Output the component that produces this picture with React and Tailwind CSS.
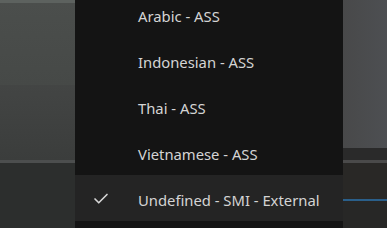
import { Check } from "lucide-react";

const tracks = [
    { label: "Arabic - ASS" },
    { label: "Indonesian - ASS" },
    { label: "Thai - ASS" },
    { label: "Vietnamese - ASS" },
    { label: "Undefined - SMI - External", selected: true },
];

export default function App() {
    return (
        <div className="relative w-[387px] h-[228px] overflow-hidden bg-[#2e302f] font-['Noto_Sans',sans-serif]">
            {/* blurred video frame behind the menu */}
            <div className="absolute inset-0 flex">
                <div className="w-[80px] h-full flex flex-col">
                    <div className="h-[3px] bg-[#5d625f]" />
                    <div className="h-[82px] bg-gradient-to-b from-[#4b4e4c] to-[#464947]" />
                    <div className="h-[75px] bg-gradient-to-b from-[#434544] to-[#3b3d3c]" />
                    <div className="h-[3px] bg-[#4c4e4e]" />
                    <div className="flex-1 bg-[#2c2e2d]" />
                </div>
                <div className="flex-1 h-full flex flex-col">
                    <div className="h-[148px] bg-gradient-to-r from-[#3a3733] via-[#3c3935] to-[#4d4f52]" />
                    <div className="h-[12px] bg-[#2a2a2a]" />
                    <div className="h-[3px] bg-[#4a4a4a]" />
                    <div className="h-[36px] bg-[#292826]" />
                    <div className="h-[2px] bg-[#2a5f8a]" />
                    <div className="flex-1 bg-[#272726]" />
                </div>
            </div>

            {/* subtitle track menu */}
            <div className="absolute left-[75px] top-[-9px] w-[268px] bg-[#141414] pb-[20px] flex flex-col">
                {tracks.map((t) => (
                    <div
                        key={t.label}
                        className={`h-[46px] pt-[5px] flex items-center ${t.selected ? "bg-[#242424]" : ""}`}
                    >
                        <div className="w-[63px] pl-[17px] flex">
                            {t.selected && <Check className="w-[18px] h-[18px] text-[#d6d6d6] -mt-[3px]" strokeWidth={2.2} />}
                        </div>
                        <span className="text-[14.8px] text-[#d4d4d4]">{t.label}</span>
                    </div>
                ))}
            </div>
        </div>
    );
}
